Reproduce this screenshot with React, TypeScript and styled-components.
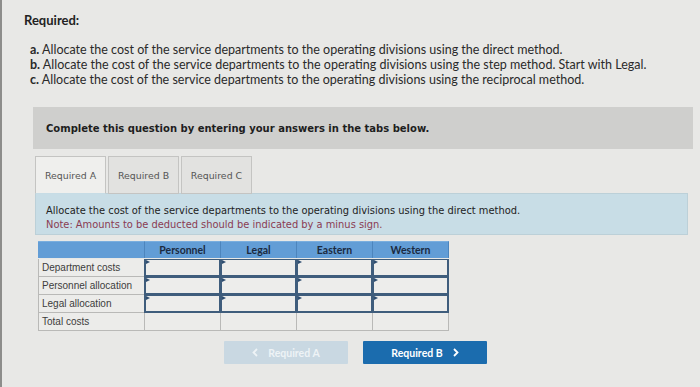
import React from "react";
import styled, { createGlobalStyle } from "styled-components";

const GlobalStyle = createGlobalStyle`
  html, body {
    margin: 0;
    padding: 0;
    background: #e7e7e5;
  }
  * {
    box-sizing: border-box;
  }
`;

const Page = styled.div`
  width: 700px;
  height: 387px;
  border-left: 2px solid #8d8d8b;
  background: #e8e8e6;
  padding: 12px 7px 0 22px;
  overflow: hidden;
`;

const Heading = styled.div`
  font-family: "Lato", "Liberation Sans", sans-serif;
  font-weight: 700;
  font-size: 13px;
  line-height: 16px;
  color: #222;
`;

const Steps = styled.ol`
  list-style: none;
  margin: 14px 0 0;
  padding: 0 0 0 6px;
  font-family: "Lato", "Liberation Sans", sans-serif;
  font-size: 12.5px;
  line-height: 15px;
  color: #2a2a2a;

  > li > b {
    font-weight: 700;
  }
`;

const Banner = styled.div`
  margin: 20px 0 0 9px;
  height: 42px;
  background: #cfcfcd;
  display: flex;
  align-items: center;
  padding-left: 13px;
  font-family: "DejaVu Sans", Verdana, sans-serif;
  font-weight: 700;
  font-size: 10px;
  color: #1e1e1e;
`;

const Work = styled.div`
  margin: 7px 0 0 11px;
  width: 653px;
`;

const Tabs = styled.div`
  display: flex;
  gap: 2px;
  position: relative;
  z-index: 1;
`;

const Tab = styled.div<{ $active?: boolean }>`
  width: 71px;
  height: 38px;
  display: flex;
  align-items: center;
  justify-content: center;
  border: 1px solid #c4c4c2;
  border-bottom: ${(p) => (p.$active ? "1px solid #c7dce5" : "1px solid #c4c4c2")};
  background: ${(p) => (p.$active ? "#efefed" : "#e2e2e0")};
  font-family: "DejaVu Sans", Verdana, sans-serif;
  font-size: 9.4px;
  color: #555;
`;

const Info = styled.div`
  margin-top: -1px;
  height: 42px;
  background: #c8dde6;
  border: 1px solid #bcd0d8;
  padding: 10px 0 0 10px;
  font-family: "DejaVu Sans", Verdana, sans-serif;
  font-size: 9.9px;
  line-height: 14px;
  color: #222;
`;

const Note = styled.div`
  color: #8a3b52;
`;

const Grid = styled.div`
  margin: 6px 0 0 3px;
  display: grid;
  grid-template-columns: 107px repeat(4, 76px);
  grid-auto-rows: 18px;
  width: 411px;
`;

const HeadCell = styled.div`
  height: 17px;
  background: #629dd6;
  border-right: 1px solid #4d85bd;
  border-top: 1px solid #7aaede;
  display: flex;
  align-items: center;
  justify-content: center;
  font-family: "Lato", "Liberation Sans", sans-serif;
  font-weight: 700;
  font-size: 10.5px;
  color: #1b2a40;
`;

const RowLabel = styled.div`
  background: #ececea;
  border: 1px solid #b9b9b7;
  border-top: none;
  display: flex;
  align-items: center;
  padding-left: 3px;
  font-family: "Liberation Sans", Arial, sans-serif;
  font-size: 10px;
  color: #3c3c3c;
`;

const InputCell = styled.div`
  position: relative;
  background: #ededeb;
  border: 2px solid #3f5d7c;
  border-top-width: 1px;
  margin-left: -1px;

  &::before {
    content: "";
    position: absolute;
    left: 0;
    top: 0;
    border-left: 4px solid #2f4e70;
    border-top: 2.5px solid transparent;
    border-bottom: 2.5px solid transparent;
  }
`;

const PlainCell = styled.div`
  background: #ececea;
  border-right: 1px solid #b9b9b7;
  border-bottom: 1px solid #b9b9b7;
`;

const Nav = styled.div`
  margin-top: 10px;
  display: flex;
  justify-content: center;
  gap: 15px;
  padding-right: 12px;
`;

const NavButton = styled.button<{ $disabled?: boolean }>`
  width: 124px;
  height: 23px;
  border: none;
  border-radius: 1px;
  background: ${(p) => (p.$disabled ? "#c9d8e2" : "#1b6cae")};
  color: ${(p) => (p.$disabled ? "#eef3f6" : "#ffffff")};
  font-family: "Lato", "Liberation Sans", sans-serif;
  font-weight: 700;
  font-size: 10.5px;
  display: flex;
  align-items: center;
  justify-content: center;
  gap: 10px;
  padding: 0;
`;

const Chevron = ({ left }: { left?: boolean }) => (
  <svg width="6" height="9" viewBox="0 0 6 9">
    <path
      d={left ? "M5 1 L1.5 4.5 L5 8" : "M1 1 L4.5 4.5 L1 8"}
      fill="none"
      stroke="currentColor"
      strokeWidth="1.8"
    />
  </svg>
);

const rows = ["Department costs", "Personnel allocation", "Legal allocation"];
const cols = ["Personnel", "Legal", "Eastern", "Western"];

export default function App() {
  return (
    <Page>
      <GlobalStyle />
      <Heading>Required:</Heading>
      <Steps>
        <li>
          <b>a.</b> Allocate the cost of the service departments to the operating divisions using the direct method.
        </li>
        <li>
          <b>b.</b> Allocate the cost of the service departments to the operating divisions using the step method. Start with Legal.
        </li>
        <li>
          <b>c.</b> Allocate the cost of the service departments to the operating divisions using the reciprocal method.
        </li>
      </Steps>
      <Banner>Complete this question by entering your answers in the tabs below.</Banner>
      <Work>
        <Tabs>
          <Tab $active>Required A</Tab>
          <Tab>Required B</Tab>
          <Tab>Required C</Tab>
        </Tabs>
        <Info>
          <div>Allocate the cost of the service departments to the operating divisions using the direct method.</div>
          <Note>Note: Amounts to be deducted should be indicated by a minus sign.</Note>
        </Info>
        <Grid>
          <HeadCell />
          {cols.map((c) => (
            <HeadCell key={c}>{c}</HeadCell>
          ))}
          {rows.map((r) => (
            <React.Fragment key={r}>
              <RowLabel>{r}</RowLabel>
              {cols.map((c) => (
                <InputCell key={c} />
              ))}
            </React.Fragment>
          ))}
          <RowLabel>Total costs</RowLabel>
          {cols.map((c) => (
            <PlainCell key={c} />
          ))}
        </Grid>
        <Nav>
          <NavButton $disabled>
            <Chevron left />
            Required A
          </NavButton>
          <NavButton>
            Required B
            <Chevron />
          </NavButton>
        </Nav>
      </Work>
    </Page>
  );
}
